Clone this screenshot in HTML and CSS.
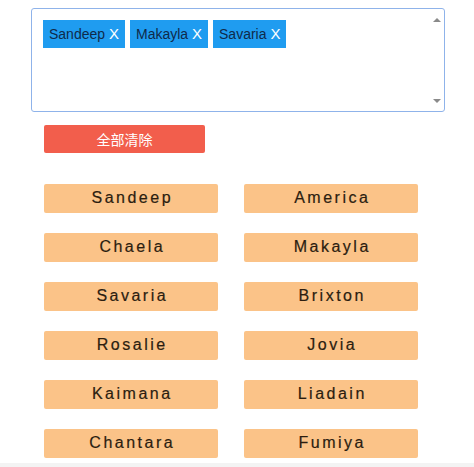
FILE: index.html
```html
<!DOCTYPE html>
<html lang="zh">
<head>
<meta charset="utf-8">
<link rel="stylesheet" href="styles.css">
</head>
<body>
<div class="page">
  <div class="picker">
    <div class="tags">
      <span class="tag"><span class="tag-name">Sandeep</span> <span class="tag-x">X</span></span>
      <span class="tag"><span class="tag-name">Makayla</span> <span class="tag-x">X</span></span>
      <span class="tag"><span class="tag-name">Savaria</span> <span class="tag-x">X</span></span>
    </div>
    <div class="scrollbar">
      <span class="arrow-up"></span>
      <span class="arrow-down"></span>
    </div>
  </div>
  <button class="clear-btn">全部清除</button>
  <div class="options">
    <button class="opt">Sandeep</button>
    <button class="opt">America</button>
    <button class="opt">Chaela</button>
    <button class="opt">Makayla</button>
    <button class="opt">Savaria</button>
    <button class="opt">Brixton</button>
    <button class="opt">Rosalie</button>
    <button class="opt">Jovia</button>
    <button class="opt">Kaimana</button>
    <button class="opt">Liadain</button>
    <button class="opt">Chantara</button>
    <button class="opt">Fumiya</button>
  </div>
</div>
<div class="bottom-strip"></div>
</body>
</html>
```
FILE: styles.css
```css
html, body {
  margin: 0;
  padding: 0;
  background: #ffffff;
}
body {
  font-family: "Liberation Sans", Arial, sans-serif;
  width: 474px;
  height: 467px;
  overflow: hidden;
}
.page {
  padding: 8px 0 0 31px;
}
.picker {
  box-sizing: border-box;
  width: 414px;
  height: 104px;
  border: 1px solid #8fb3ea;
  border-radius: 3px;
  display: flex;
  background: #fff;
}
.tags {
  flex: 1;
  display: flex;
  align-items: flex-start;
  gap: 5px;
  padding: 11px 0 0 11px;
}
.tag {
  display: inline-block;
  height: 28px;
  line-height: 28px;
  padding: 0 6px 0 6px;
  background: #1f9cf0;
  font-size: 14px;
  white-space: nowrap;
}
.tag-name {
  color: #0f2a4a;
}
.tag-x {
  color: #ffffff;
  font-size: 15px;
}
.scrollbar {
  width: 12px;
  margin-right: 1px;
  display: flex;
  flex-direction: column;
  justify-content: space-between;
  align-items: center;
  padding: 9px 0 8px;
}
.arrow-up {
  width: 0;
  height: 0;
  border-left: 4px solid transparent;
  border-right: 4px solid transparent;
  border-bottom: 4px solid #8a8a8a;
}
.arrow-down {
  width: 0;
  height: 0;
  border-left: 4px solid transparent;
  border-right: 4px solid transparent;
  border-top: 4px solid #8a8a8a;
}
.clear-btn {
  display: block;
  margin: 13px 0 0 13px;
  width: 161px;
  height: 28px;
  border: none;
  border-radius: 2px;
  background: #f25e4c;
  color: #ffffff;
  font-family: "Noto Sans CJK SC", sans-serif;
  font-size: 14px;
  padding: 0;
}
.options {
  margin: 31px 0 0 13px;
  display: grid;
  grid-template-columns: 174px 174px;
  column-gap: 26px;
  row-gap: 20px;
}
.opt {
  height: 29px;
  border: none;
  border-radius: 2px;
  background: #fbc388;
  color: #2b1d10;
  font-family: "Liberation Sans", Arial, sans-serif;
  font-size: 16px;
  letter-spacing: 2.5px;
  -webkit-text-stroke: 0.2px #2b1d10;
  padding: 0 0 1px 2.5px;
}
.bottom-strip {
  margin-top: 5px;
  height: 4px;
  background: #f3f3f3;
}
```
